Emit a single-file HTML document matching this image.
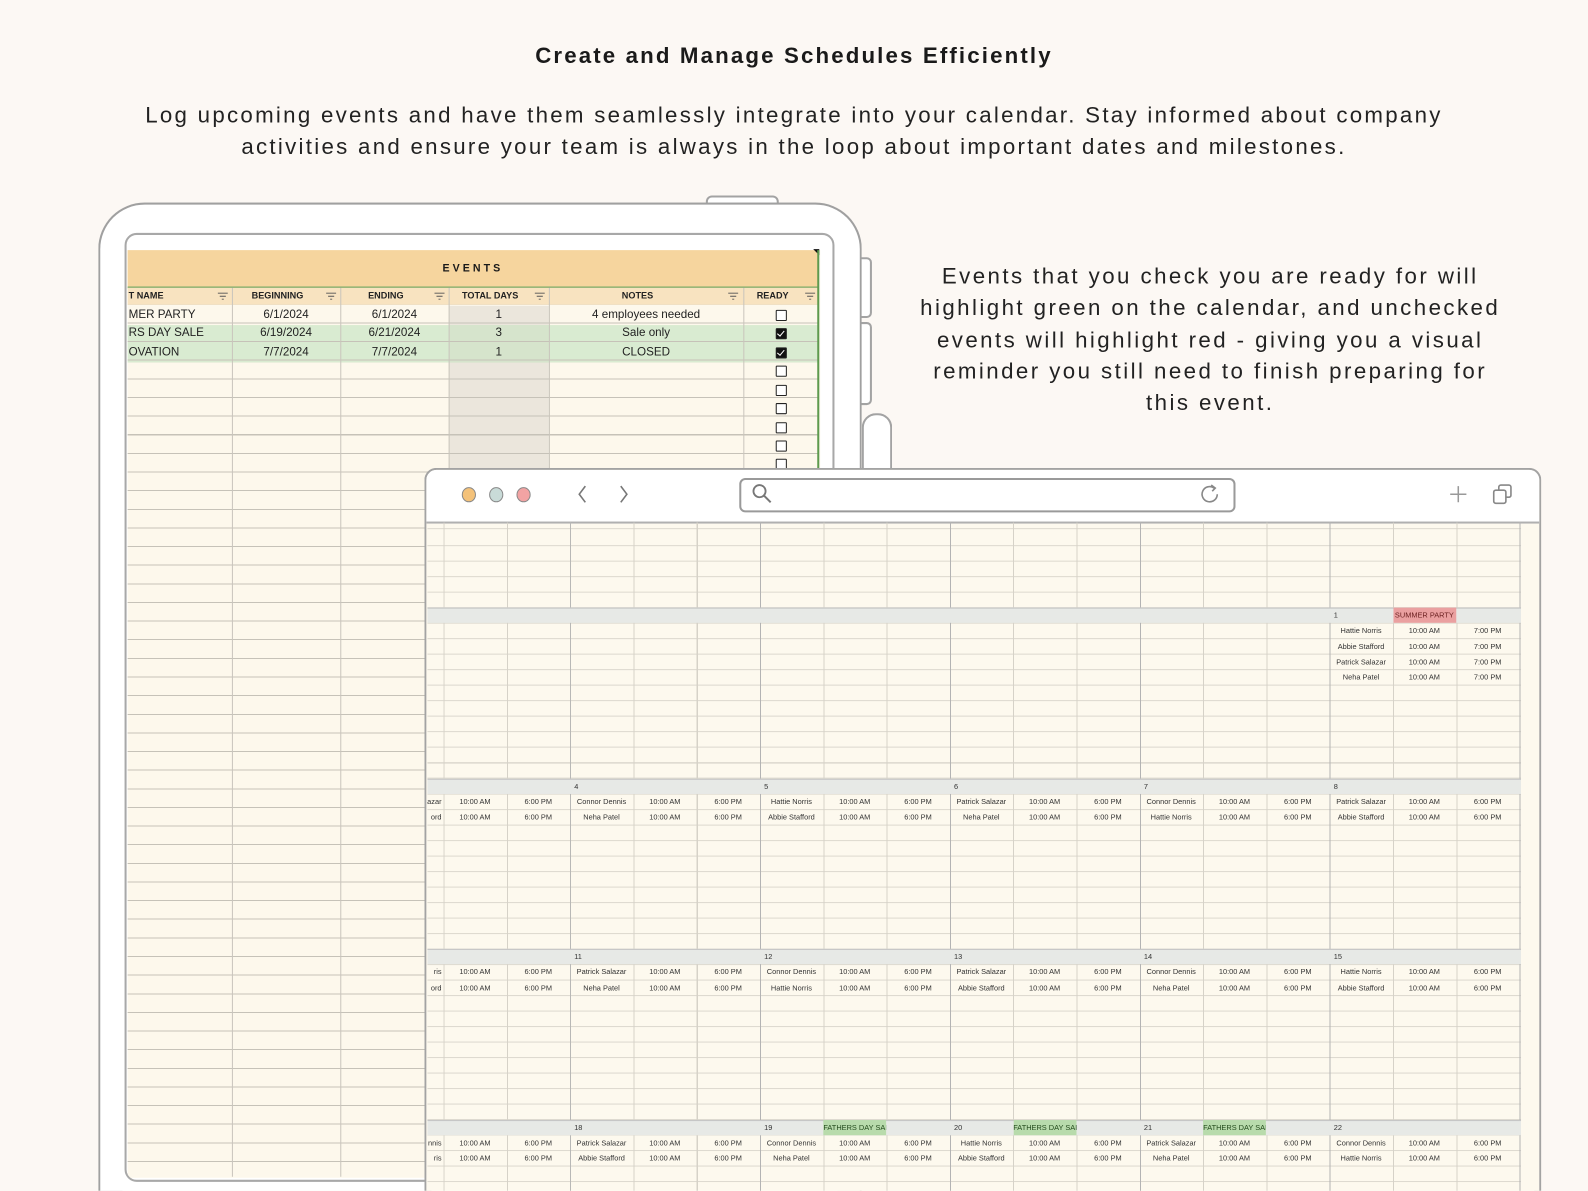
<!DOCTYPE html>
<html><head><meta charset="utf-8"><style>
html,body{margin:0;padding:0;width:1588px;height:1191px;overflow:hidden;background:#fcf8f4;}
#w{position:absolute;left:0;top:0;width:1568px;height:1176px;overflow:hidden;transform:scale(1.0127);transform-origin:0 0;font-family:"Liberation Sans",sans-serif;color:#1a1a1a;}
.a{position:absolute;}
h1{position:absolute;left:0;width:1568px;top:42px;margin:0;text-align:center;font-size:22px;font-weight:bold;letter-spacing:2.1px;}
.p{position:absolute;text-align:center;font-size:22px;letter-spacing:2.25px;white-space:nowrap;line-height:31.3px;color:#222;}
.hc{position:absolute;top:284px;height:17px;line-height:17px;font-size:9px;font-weight:bold;text-align:center;color:#222;}
.dc{position:absolute;height:18px;line-height:18px;font-size:11.5px;text-align:center;color:#222;white-space:nowrap;}
.cb{position:absolute;left:766px;width:9px;height:9px;border:1.3px solid #222;background:#fff;border-radius:1px;}
.cb.k{background:#111;}
.cb.k:after{content:"";position:absolute;left:2px;top:0px;width:3px;height:6px;border:solid #fff;border-width:0 1.5px 1.5px 0;transform:rotate(40deg);}
.f{position:absolute;top:289px;width:10px;height:7px;}
.c{position:absolute;width:62px;height:15px;line-height:15px;font-size:7.3px;text-align:center;color:#333;white-space:nowrap;overflow:hidden;}
.d{position:absolute;height:15px;line-height:15px;font-size:7.3px;color:#333;padding-left:4px;}
.r{text-align:right;}
.band{position:absolute;left:0;width:1080px;height:15.3px;background:#e7e9e6;border-top:1px solid #c4c4c4;box-sizing:border-box;}
.vl{position:absolute;top:284px;width:1px;height:878px;background:#c9c5bc;}
</style></head><body><div id="w">
<h1>Create and Manage Schedules Efficiently</h1>
<div class="p" style="left:0;width:1568px;top:98px;">Log upcoming events and have them seamlessly integrate into your calendar. Stay informed about company<br>activities and ensure your team is always in the loop about important dates and milestones.</div>
<div class="p" style="left:895px;width:600px;top:257px;letter-spacing:2.4px;">Events that you check you are ready for will<br>highlight green on the calendar, and unchecked<br>events will highlight red - giving you a visual<br>reminder you still need to finish preparing for<br>this event.</div>

<div class="a" style="left:697px;top:193px;width:68px;height:14px;border:2px solid #a3a3a3;border-radius:6px;background:#fff;"></div>
<div class="a" style="left:845px;top:254px;width:12px;height:56px;border:2px solid #a3a3a3;border-radius:5px;background:#fff;"></div>
<div class="a" style="left:845px;top:318px;width:12px;height:78px;border:2px solid #a3a3a3;border-radius:5px;background:#fff;"></div>
<div class="a" style="left:851px;top:408px;width:26px;height:60px;border:2px solid #a3a3a3;border-bottom:none;border-radius:14px 14px 0 0;background:#fff;"></div>
<div class="a" style="left:97px;top:200px;width:750px;height:973.5px;border:2.5px solid #a0a0a0;border-bottom:none;border-radius:46px 46px 0 0;background:#fff;"></div>
<div class="a" style="left:123px;top:230px;width:697px;height:933px;border:2px solid #a8a8a8;border-radius:12px;background:#fff;overflow:hidden;">
 <div class="a" style="left:1px;top:15px;width:684px;height:916px;background:#fdf8ec;"></div>
</div>
<div class="a" style="left:126px;top:247px;width:682px;height:36px;background:#f6d59e;"></div>
<div class="a" style="left:126px;top:247px;width:682px;height:36px;line-height:36px;text-align:center;font-size:10.5px;font-weight:bold;letter-spacing:3px;">EVENTS</div>
<div class="a" style="left:803px;top:246px;width:0;height:0;border-left:6px solid transparent;border-top:6px solid #111;"></div>
<div class="a" style="left:126px;top:283px;width:682px;height:1.5px;background:#5e9a4e;"></div>
<div class="a" style="left:126px;top:284px;width:682px;height:17px;background:#f8e3c0;"></div>
<div class="a" style="left:443px;top:302px;width:99px;height:860px;background:#ebe6dc;"></div>
<div class="a" style="left:126px;top:320.5px;width:682px;height:37px;background:#d9ebd1;"></div>
<div class="a" style="left:443px;top:320.5px;width:99px;height:37px;background:#d6e4cc;"></div>
<div class="a" style="left:126px;top:301px;width:682px;height:860px;background:repeating-linear-gradient(180deg,transparent 0 17.4px,#c6c2b8 17.4px 18.4px);"></div>
<div class="vl" style="left:229px"></div>
<div class="vl" style="left:336px"></div>
<div class="vl" style="left:443px"></div>
<div class="vl" style="left:542px"></div>
<div class="vl" style="left:734px"></div>
<div class="a" style="left:807px;top:247px;width:1.5px;height:915px;background:#5e9a4e;"></div>
<div class="hc" style="left:127px;text-align:left;">T NAME</div>
<div class="hc" style="left:229px;width:90px;">BEGINNING</div>
<div class="hc" style="left:336px;width:90px;">ENDING</div>
<div class="hc" style="left:443px;width:82px;">TOTAL DAYS</div>
<div class="hc" style="left:542px;width:175px;">NOTES</div>
<div class="hc" style="left:734px;width:58px;">READY</div>
<svg class="f" style="left:215px" viewBox="0 0 10 7"><path d="M0 .5H10M2 3.5H8M4 6.5H6" stroke="#555" stroke-width="1"/></svg>
<svg class="f" style="left:322px" viewBox="0 0 10 7"><path d="M0 .5H10M2 3.5H8M4 6.5H6" stroke="#555" stroke-width="1"/></svg>
<svg class="f" style="left:429px" viewBox="0 0 10 7"><path d="M0 .5H10M2 3.5H8M4 6.5H6" stroke="#555" stroke-width="1"/></svg>
<svg class="f" style="left:528px" viewBox="0 0 10 7"><path d="M0 .5H10M2 3.5H8M4 6.5H6" stroke="#555" stroke-width="1"/></svg>
<svg class="f" style="left:719px" viewBox="0 0 10 7"><path d="M0 .5H10M2 3.5H8M4 6.5H6" stroke="#555" stroke-width="1"/></svg>
<svg class="f" style="left:795px" viewBox="0 0 10 7"><path d="M0 .5H10M2 3.5H8M4 6.5H6" stroke="#555" stroke-width="1"/></svg>
<div class="dc" style="left:127px;top:302px;">MER PARTY</div>
<div class="dc" style="left:229px;top:302px;width:107px;">6/1/2024</div>
<div class="dc" style="left:336px;top:302px;width:107px;">6/1/2024</div>
<div class="dc" style="left:443px;top:302px;width:99px;">1</div>
<div class="dc" style="left:542px;top:302px;width:192px;">4 employees needed</div>
<div class="dc" style="left:127px;top:320px;">RS DAY SALE</div>
<div class="dc" style="left:229px;top:320px;width:107px;">6/19/2024</div>
<div class="dc" style="left:336px;top:320px;width:107px;">6/21/2024</div>
<div class="dc" style="left:443px;top:320px;width:99px;">3</div>
<div class="dc" style="left:542px;top:320px;width:192px;">Sale only</div>
<div class="dc" style="left:127px;top:339px;">OVATION</div>
<div class="dc" style="left:229px;top:339px;width:107px;">7/7/2024</div>
<div class="dc" style="left:336px;top:339px;width:107px;">7/7/2024</div>
<div class="dc" style="left:443px;top:339px;width:99px;">1</div>
<div class="dc" style="left:542px;top:339px;width:192px;">CLOSED</div>
<div class="cb" style="top:306px"></div>
<div class="cb k" style="top:324px"></div>
<div class="cb k" style="top:343px"></div>
<div class="cb" style="top:361px"></div>
<div class="cb" style="top:380px"></div>
<div class="cb" style="top:398px"></div>
<div class="cb" style="top:417px"></div>
<div class="cb" style="top:435px"></div>
<div class="cb" style="top:453px"></div>

<div class="a" style="left:419px;top:462px;width:1099px;height:712px;border:2px solid #a3a3a3;border-bottom:none;border-radius:12px 12px 0 0;background:#fdf9ee;overflow:hidden;">
 <div class="a" style="left:0;top:0;width:1099px;height:51px;background:#fff;border-bottom:2px solid #b0b0b0;"></div>
</div>
<div class="a" style="left:456px;top:481px;width:12px;height:13px;border-radius:50%;background:#f4c27a;border:1.3px solid #888;"></div>
<div class="a" style="left:483px;top:481px;width:12px;height:13px;border-radius:50%;background:#c9dbd8;border:1.3px solid #888;"></div>
<div class="a" style="left:510px;top:481px;width:12px;height:13px;border-radius:50%;background:#f2a3a3;border:1.3px solid #888;"></div>
<svg class="a" style="left:566px;top:478px" width="60" height="20"><path d="M12 2L6 10L12 18M47 2L53 10L47 18" stroke="#777" stroke-width="1.6" fill="none"/></svg>
<div class="a" style="left:730px;top:472px;width:486px;height:30px;border:2px solid #9a9a9a;border-radius:6px;background:#fff;"></div>
<svg class="a" style="left:740px;top:476px" width="28" height="24"><circle cx="10" cy="9" r="6" stroke="#777" stroke-width="1.8" fill="none"/><path d="M14 13L21 20" stroke="#777" stroke-width="2"/></svg>
<svg class="a" style="left:1184px;top:477px" width="22" height="22"><path d="M15 5A7.5 7.5 0 1 0 18 11" stroke="#888" stroke-width="1.6" fill="none"/><path d="M12 2L16 5L13 8" stroke="#888" stroke-width="1.6" fill="none"/></svg>
<svg class="a" style="left:1430px;top:478px" width="20" height="20"><path d="M10 2V18M2 10H18" stroke="#999" stroke-width="1.5"/></svg>
<svg class="a" style="left:1472px;top:476px" width="24" height="24"><rect x="8" y="3" width="12" height="12" rx="2" stroke="#888" stroke-width="1.6" fill="#fff"/><rect x="3" y="8" width="12" height="13" rx="2" stroke="#888" stroke-width="1.6" fill="#fff"/></svg>

<div class="a" style="left:422px;top:516px;width:1080px;height:660px;overflow:hidden;">
 <div class="a" style="left:0;top:0;width:1080px;height:660px;background:repeating-linear-gradient(180deg,transparent 0 14.3px,#dcd8ce 14.3px 15.32px);background-position:0 8px;"></div>
 <div class="a" style="left:16px;top:0;width:1064px;height:660px;background:repeating-linear-gradient(90deg,#d6d2c8 0 1px,transparent 1px 62.5px);"></div>
 <div class="a" style="left:141px;top:0;width:939px;height:660px;background:repeating-linear-gradient(90deg,#b3b3b3 0 1px,transparent 1px 187.5px);"></div>
 <div class="band" style="top:84px"></div>
 <div class="band" style="top:252.5px"></div>
 <div class="band" style="top:421px"></div>
 <div class="band" style="top:589.5px"></div>

 <div class="d" style="left:891px;top:84px">1</div>
 <div class="c" style="left:953.5px;top:84px;background:#eaa0a0;color:#6a1f1f;">SUMMER PARTY</div>
 <div class="c" style="left:891px;top:99.3px">Hattie Norris</div><div class="c" style="left:953.5px;top:99.3px">10:00 AM</div><div class="c" style="left:1016px;top:99.3px">7:00 PM</div>
 <div class="c" style="left:891px;top:114.6px">Abbie Stafford</div><div class="c" style="left:953.5px;top:114.6px">10:00 AM</div><div class="c" style="left:1016px;top:114.6px">7:00 PM</div>
 <div class="c" style="left:891px;top:129.9px">Patrick Salazar</div><div class="c" style="left:953.5px;top:129.9px">10:00 AM</div><div class="c" style="left:1016px;top:129.9px">7:00 PM</div>
 <div class="c" style="left:891px;top:145.2px">Neha Patel</div><div class="c" style="left:953.5px;top:145.2px">10:00 AM</div><div class="c" style="left:1016px;top:145.2px">7:00 PM</div>

 <div class="c r" style="left:-48px;top:267.8px">azar</div><div class="c r" style="left:-48px;top:283.1px">ord</div>
 <div class="c" style="left:16px;top:267.8px">10:00 AM</div><div class="c" style="left:78.5px;top:267.8px">6:00 PM</div>
 <div class="c" style="left:16px;top:283.1px">10:00 AM</div><div class="c" style="left:78.5px;top:283.1px">6:00 PM</div>
 <div class="d" style="left:141px;top:252.5px">4</div><div class="d" style="left:328.5px;top:252.5px">5</div><div class="d" style="left:516px;top:252.5px">6</div><div class="d" style="left:703.5px;top:252.5px">7</div><div class="d" style="left:891px;top:252.5px">8</div>
 <div class="c" style="left:141px;top:267.8px">Connor Dennis</div><div class="c" style="left:203.5px;top:267.8px">10:00 AM</div><div class="c" style="left:266px;top:267.8px">6:00 PM</div>
 <div class="c" style="left:141px;top:283.1px">Neha Patel</div><div class="c" style="left:203.5px;top:283.1px">10:00 AM</div><div class="c" style="left:266px;top:283.1px">6:00 PM</div>
 <div class="c" style="left:328.5px;top:267.8px">Hattie Norris</div><div class="c" style="left:391px;top:267.8px">10:00 AM</div><div class="c" style="left:453.5px;top:267.8px">6:00 PM</div>
 <div class="c" style="left:328.5px;top:283.1px">Abbie Stafford</div><div class="c" style="left:391px;top:283.1px">10:00 AM</div><div class="c" style="left:453.5px;top:283.1px">6:00 PM</div>
 <div class="c" style="left:516px;top:267.8px">Patrick Salazar</div><div class="c" style="left:578.5px;top:267.8px">10:00 AM</div><div class="c" style="left:641px;top:267.8px">6:00 PM</div>
 <div class="c" style="left:516px;top:283.1px">Neha Patel</div><div class="c" style="left:578.5px;top:283.1px">10:00 AM</div><div class="c" style="left:641px;top:283.1px">6:00 PM</div>
 <div class="c" style="left:703.5px;top:267.8px">Connor Dennis</div><div class="c" style="left:766px;top:267.8px">10:00 AM</div><div class="c" style="left:828.5px;top:267.8px">6:00 PM</div>
 <div class="c" style="left:703.5px;top:283.1px">Hattie Norris</div><div class="c" style="left:766px;top:283.1px">10:00 AM</div><div class="c" style="left:828.5px;top:283.1px">6:00 PM</div>
 <div class="c" style="left:891px;top:267.8px">Patrick Salazar</div><div class="c" style="left:953.5px;top:267.8px">10:00 AM</div><div class="c" style="left:1016px;top:267.8px">6:00 PM</div>
 <div class="c" style="left:891px;top:283.1px">Abbie Stafford</div><div class="c" style="left:953.5px;top:283.1px">10:00 AM</div><div class="c" style="left:1016px;top:283.1px">6:00 PM</div>

 <div class="c r" style="left:-48px;top:436.3px">ris</div><div class="c r" style="left:-48px;top:451.6px">ord</div>
 <div class="c" style="left:16px;top:436.3px">10:00 AM</div><div class="c" style="left:78.5px;top:436.3px">6:00 PM</div>
 <div class="c" style="left:16px;top:451.6px">10:00 AM</div><div class="c" style="left:78.5px;top:451.6px">6:00 PM</div>
 <div class="d" style="left:141px;top:421px">11</div><div class="d" style="left:328.5px;top:421px">12</div><div class="d" style="left:516px;top:421px">13</div><div class="d" style="left:703.5px;top:421px">14</div><div class="d" style="left:891px;top:421px">15</div>
 <div class="c" style="left:141px;top:436.3px">Patrick Salazar</div><div class="c" style="left:203.5px;top:436.3px">10:00 AM</div><div class="c" style="left:266px;top:436.3px">6:00 PM</div>
 <div class="c" style="left:141px;top:451.6px">Neha Patel</div><div class="c" style="left:203.5px;top:451.6px">10:00 AM</div><div class="c" style="left:266px;top:451.6px">6:00 PM</div>
 <div class="c" style="left:328.5px;top:436.3px">Connor Dennis</div><div class="c" style="left:391px;top:436.3px">10:00 AM</div><div class="c" style="left:453.5px;top:436.3px">6:00 PM</div>
 <div class="c" style="left:328.5px;top:451.6px">Hattie Norris</div><div class="c" style="left:391px;top:451.6px">10:00 AM</div><div class="c" style="left:453.5px;top:451.6px">6:00 PM</div>
 <div class="c" style="left:516px;top:436.3px">Patrick Salazar</div><div class="c" style="left:578.5px;top:436.3px">10:00 AM</div><div class="c" style="left:641px;top:436.3px">6:00 PM</div>
 <div class="c" style="left:516px;top:451.6px">Abbie Stafford</div><div class="c" style="left:578.5px;top:451.6px">10:00 AM</div><div class="c" style="left:641px;top:451.6px">6:00 PM</div>
 <div class="c" style="left:703.5px;top:436.3px">Connor Dennis</div><div class="c" style="left:766px;top:436.3px">10:00 AM</div><div class="c" style="left:828.5px;top:436.3px">6:00 PM</div>
 <div class="c" style="left:703.5px;top:451.6px">Neha Patel</div><div class="c" style="left:766px;top:451.6px">10:00 AM</div><div class="c" style="left:828.5px;top:451.6px">6:00 PM</div>
 <div class="c" style="left:891px;top:436.3px">Hattie Norris</div><div class="c" style="left:953.5px;top:436.3px">10:00 AM</div><div class="c" style="left:1016px;top:436.3px">6:00 PM</div>
 <div class="c" style="left:891px;top:451.6px">Abbie Stafford</div><div class="c" style="left:953.5px;top:451.6px">10:00 AM</div><div class="c" style="left:1016px;top:451.6px">6:00 PM</div>

 <div class="c r" style="left:-48px;top:604.8px">nnis</div><div class="c r" style="left:-48px;top:620.1px">ris</div>
 <div class="c" style="left:16px;top:604.8px">10:00 AM</div><div class="c" style="left:78.5px;top:604.8px">6:00 PM</div>
 <div class="c" style="left:16px;top:620.1px">10:00 AM</div><div class="c" style="left:78.5px;top:620.1px">6:00 PM</div>
 <div class="d" style="left:141px;top:589.5px">18</div><div class="d" style="left:328.5px;top:589.5px">19</div><div class="d" style="left:516px;top:589.5px">20</div><div class="d" style="left:703.5px;top:589.5px">21</div><div class="d" style="left:891px;top:589.5px">22</div>
 <div class="c" style="left:391px;top:589.5px;background:#b8dbac;color:#234a1c;text-align:left;">FATHERS DAY SALE</div>
 <div class="c" style="left:578.5px;top:589.5px;background:#b8dbac;color:#234a1c;text-align:left;">FATHERS DAY SALE</div>
 <div class="c" style="left:766px;top:589.5px;background:#b8dbac;color:#234a1c;text-align:left;">FATHERS DAY SALE</div>
 <div class="c" style="left:141px;top:604.8px">Patrick Salazar</div><div class="c" style="left:203.5px;top:604.8px">10:00 AM</div><div class="c" style="left:266px;top:604.8px">6:00 PM</div>
 <div class="c" style="left:141px;top:620.1px">Abbie Stafford</div><div class="c" style="left:203.5px;top:620.1px">10:00 AM</div><div class="c" style="left:266px;top:620.1px">6:00 PM</div>
 <div class="c" style="left:328.5px;top:604.8px">Connor Dennis</div><div class="c" style="left:391px;top:604.8px">10:00 AM</div><div class="c" style="left:453.5px;top:604.8px">6:00 PM</div>
 <div class="c" style="left:328.5px;top:620.1px">Neha Patel</div><div class="c" style="left:391px;top:620.1px">10:00 AM</div><div class="c" style="left:453.5px;top:620.1px">6:00 PM</div>
 <div class="c" style="left:516px;top:604.8px">Hattie Norris</div><div class="c" style="left:578.5px;top:604.8px">10:00 AM</div><div class="c" style="left:641px;top:604.8px">6:00 PM</div>
 <div class="c" style="left:516px;top:620.1px">Abbie Stafford</div><div class="c" style="left:578.5px;top:620.1px">10:00 AM</div><div class="c" style="left:641px;top:620.1px">6:00 PM</div>
 <div class="c" style="left:703.5px;top:604.8px">Patrick Salazar</div><div class="c" style="left:766px;top:604.8px">10:00 AM</div><div class="c" style="left:828.5px;top:604.8px">6:00 PM</div>
 <div class="c" style="left:703.5px;top:620.1px">Neha Patel</div><div class="c" style="left:766px;top:620.1px">10:00 AM</div><div class="c" style="left:828.5px;top:620.1px">6:00 PM</div>
 <div class="c" style="left:891px;top:604.8px">Connor Dennis</div><div class="c" style="left:953.5px;top:604.8px">10:00 AM</div><div class="c" style="left:1016px;top:604.8px">6:00 PM</div>
 <div class="c" style="left:891px;top:620.1px">Hattie Norris</div><div class="c" style="left:953.5px;top:620.1px">10:00 AM</div><div class="c" style="left:1016px;top:620.1px">6:00 PM</div>
</div>
</div></body></html>
